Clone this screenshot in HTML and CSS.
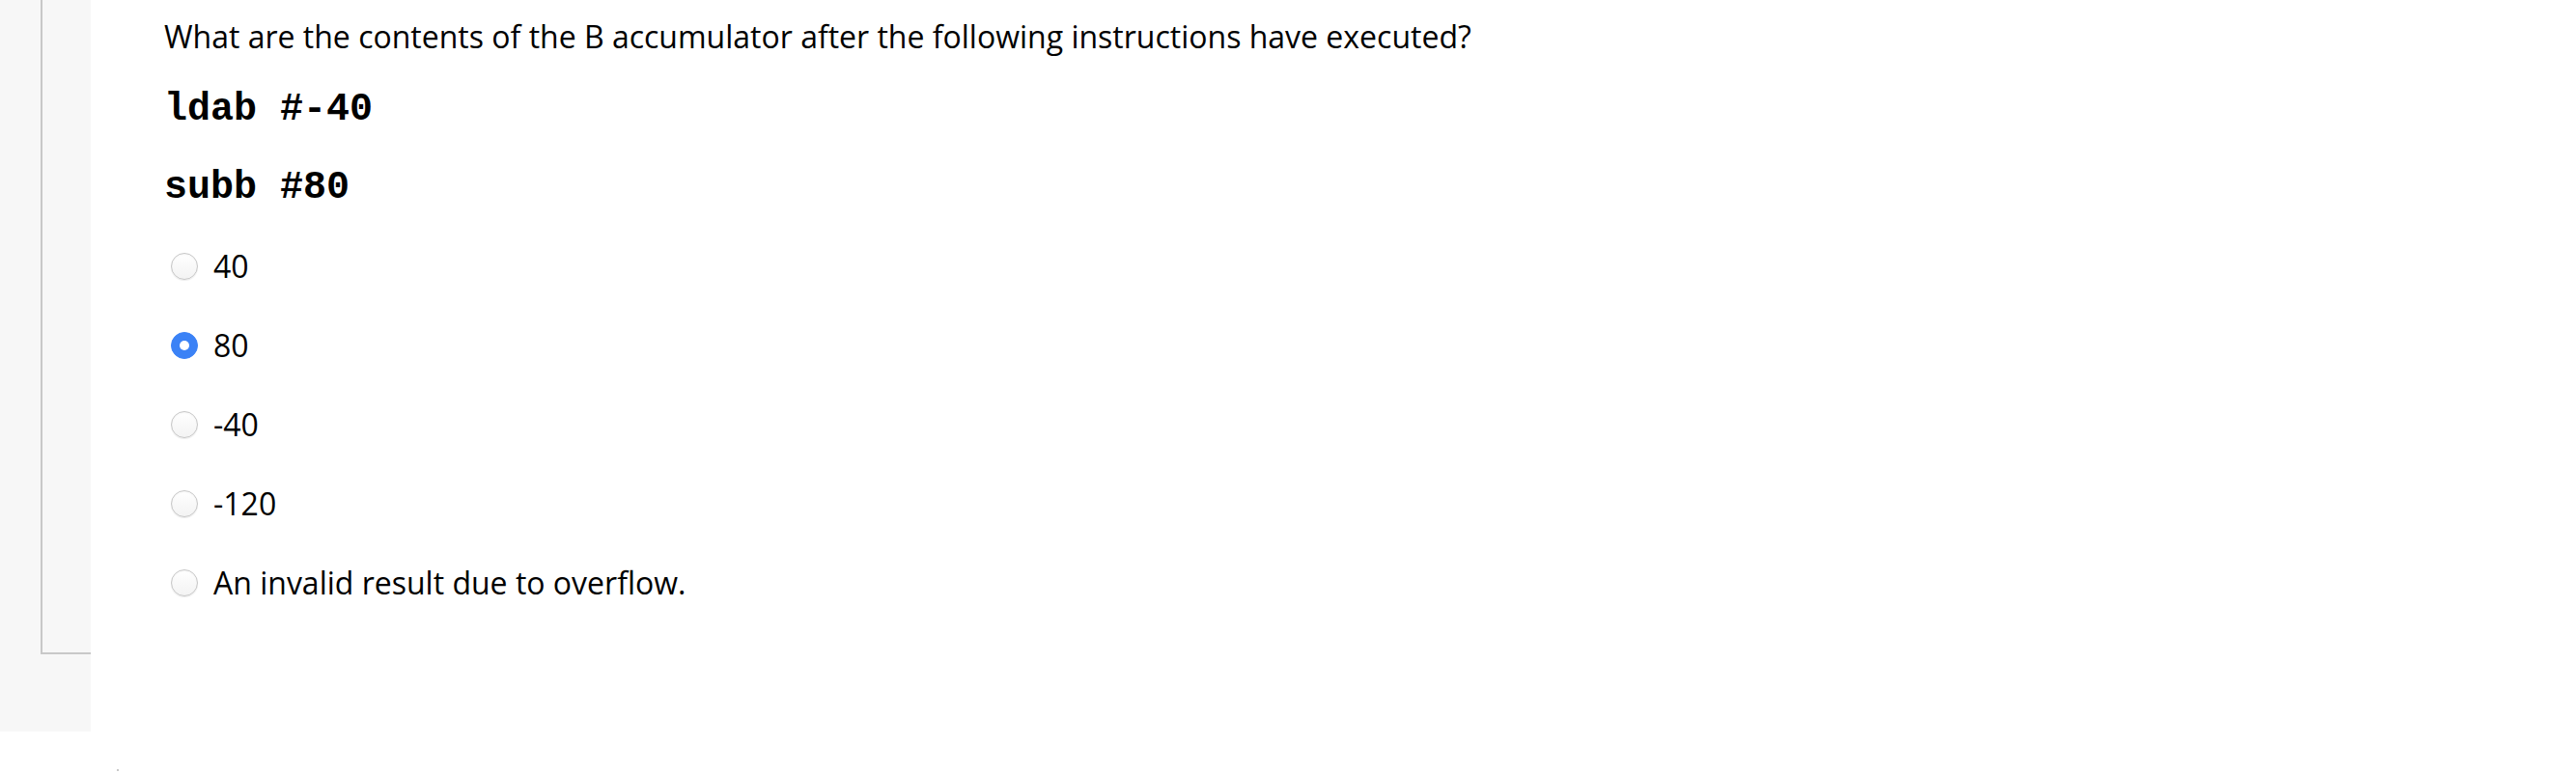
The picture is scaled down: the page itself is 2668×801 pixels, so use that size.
FILE: index.html
```html
<!DOCTYPE html>
<html>
<head>
<meta charset="utf-8">
<link rel="stylesheet" href="styles.css">
</head>
<body>
<div class="page">
  <aside class="side">
    <div class="side-box"></div>
  </aside>
  <main class="main">
    <p class="question">What are the contents of the B accumulator after the following instructions have executed?</p>
    <p class="code">ldab #-40</p>
    <p class="code">subb #80</p>
    <div class="options">
      <label class="option"><span class="radio"></span><span class="opt-text">40</span></label>
      <label class="option"><span class="radio checked"></span><span class="opt-text">80</span></label>
      <label class="option"><span class="radio"></span><span class="opt-text">-40</span></label>
      <label class="option"><span class="radio"></span><span class="opt-text">-120</span></label>
      <label class="option"><span class="radio"></span><span class="opt-text">An invalid result due to overflow.</span></label>
    </div>
  </main>
</div>
<div class="dot"></div>
</body>
</html>
```

FILE: styles.css
```css
html, body {
  margin: 0;
  padding: 0;
  background: #ffffff;
}
body {
  width: 2668px;
  height: 801px;
  overflow: hidden;
  position: relative;
  font-family: "Open Sans", "Noto Sans", sans-serif;
  color: #000;
}
.page {
  display: flex;
  align-items: flex-start;
}
.side {
  width: 94px;
  height: 758px;
  background: #f7f7f7;
  flex: none;
}
.side-box {
  margin-left: 42px;
  height: 676px;
  border-left: 2px solid #c8c8c8;
  border-bottom: 2px solid #c8c8c8;
}
.main {
  padding-left: 76px;
  padding-top: 18px;
  display: flex;
  flex-direction: column;
}
.question {
  margin: 0;
  font-size: 32px;
  line-height: 40px;
}
.code {
  margin: 32px 0 0 0;
  font-family: "Liberation Mono", "Courier New", monospace;
  font-weight: bold;
  font-size: 40px;
  line-height: 48px;
}
.code + .code {
  margin-top: 33px;
}
.options {
  margin-top: 37px;
  display: flex;
  flex-direction: column;
  gap: 42px;
}
.option {
  display: flex;
  align-items: center;
  height: 40px;
  font-size: 32px;
  line-height: 40px;
}
.radio {
  width: 26px;
  height: 26px;
  border-radius: 50%;
  border: 1px solid #c6c6c6;
  background: linear-gradient(#ffffff, #f3f3f3);
  box-shadow: 0 1px 1px rgba(0,0,0,0.08), inset 0 1px 2px rgba(0,0,0,0.04);
  margin-left: 7px;
  margin-right: 16px;
  flex: none;
  box-sizing: content-box;
}
.radio.checked {
  border-color: #3b82f6;
  background: #3b82f6;
  box-shadow: none;
  position: relative;
}
.radio.checked::after {
  content: "";
  position: absolute;
  left: 8px;
  top: 8px;
  width: 10px;
  height: 10px;
  border-radius: 50%;
  background: #fff;
}
.dot {
  position: absolute;
  left: 121px;
  top: 797px;
  width: 2px;
  height: 2px;
  background: #c8c8c8;
}
```
